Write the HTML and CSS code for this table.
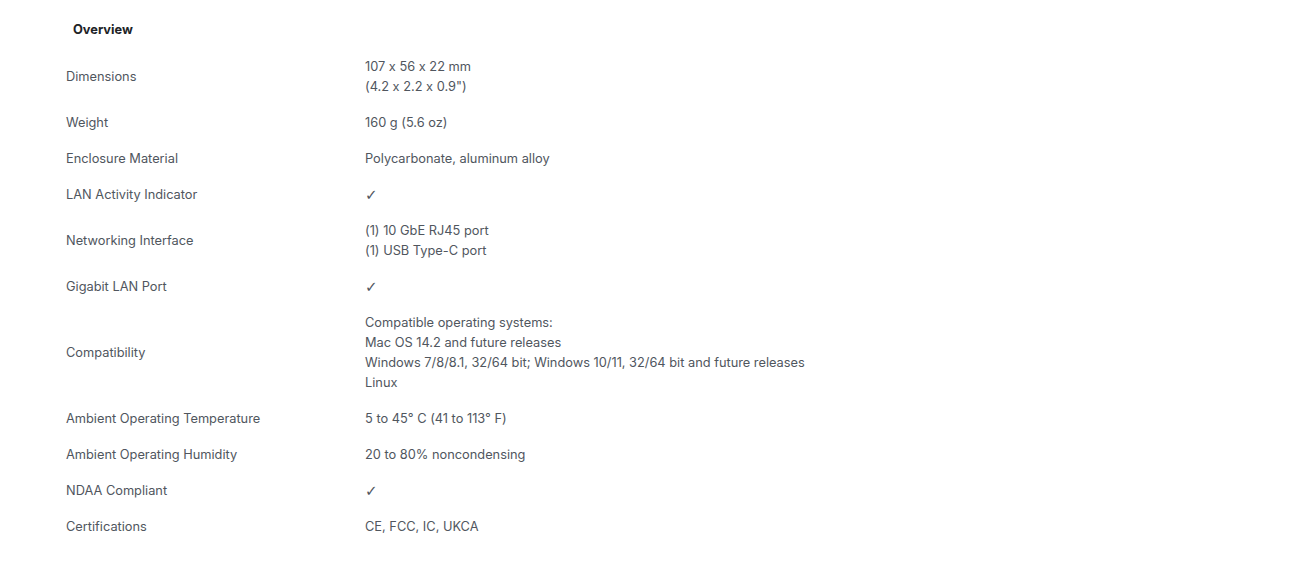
FILE: index.html
```html
<!DOCTYPE html>
<html>
<head>
<meta charset="utf-8">
<link rel="stylesheet" href="styles.css">
</head>
<body>
<section class="specs">
  <h2 class="title">Overview</h2>
  <div class="table">
    <div class="row"><div class="label">Dimensions</div><div class="value">107 x 56 x 22 mm<br>(4.2 x 2.2 x 0.9")</div></div>
    <div class="row"><div class="label">Weight</div><div class="value">160 g (5.6 oz)</div></div>
    <div class="row"><div class="label">Enclosure Material</div><div class="value">Polycarbonate, aluminum alloy</div></div>
    <div class="row"><div class="label">LAN Activity Indicator</div><div class="value"><span class="check">✓</span></div></div>
    <div class="row"><div class="label">Networking Interface</div><div class="value">(1) 10 GbE RJ45 port<br>(1) USB Type-C port</div></div>
    <div class="row"><div class="label">Gigabit LAN Port</div><div class="value"><span class="check">✓</span></div></div>
    <div class="row"><div class="label">Compatibility</div><div class="value">Compatible operating systems:<br>Mac OS 14.2 and future releases<br>Windows 7/8/8.1, 32/64 bit; Windows 10/11, 32/64 bit and future releases<br>Linux</div></div>
    <div class="row"><div class="label">Ambient Operating Temperature</div><div class="value">5 to 45° C (41 to 113° F)</div></div>
    <div class="row"><div class="label">Ambient Operating Humidity</div><div class="value">20 to 80% noncondensing</div></div>
    <div class="row"><div class="label">NDAA Compliant</div><div class="value"><span class="check">✓</span></div></div>
    <div class="row"><div class="label">Certifications</div><div class="value">CE, FCC, IC, UKCA</div></div>
  </div>
</section>
</body>
</html>
```
FILE: styles.css
```css
html, body {
  margin: 0;
  padding: 0;
  background: #ffffff;
}
body {
  font-family: Inter, "Noto Sans", sans-serif;
  font-size: 12.8px;
  line-height: 20px;
  color: #50565e;
  font-feature-settings: "calt" 0;
}
.specs {
  padding: 20px 0 0 66px;
}
.title {
  margin: 0 0 9px 7px;
  font-size: 12.8px;
  line-height: 20px;
  font-weight: 700;
  color: #212327;
}
.row {
  display: grid;
  grid-template-columns: 299px 1fr;
  align-items: center;
  padding: 8px 0;
}
.value {
  min-height: 20px;
}
.check {
  display: inline-block;
  height: 20px;
  vertical-align: top;
  font-family: "DejaVu Sans", sans-serif;
  font-size: 15px;
  line-height: 20px;
}
```
